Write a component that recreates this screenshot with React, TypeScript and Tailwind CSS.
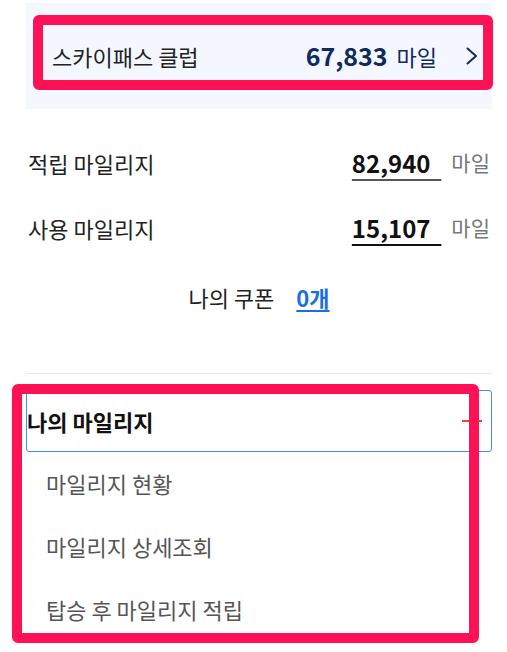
const items = ["마일리지 현황", "마일리지 상세조회", "탑승 후 마일리지 적립"];

export default function App() {
  return (
    <div className="relative w-[507px] h-[652px] bg-white overflow-hidden font-['Noto_Sans_CJK_KR','Noto_Sans',sans-serif]">
      <div className="ml-[26px] w-[466px] pt-[3px]">
        {/* SKYPASS CLUB */}
        <div className="h-[106px] bg-[#f4f7fd] flex items-center pl-[26px] pr-[14px]">
          <span className="text-[22px] text-[#222]">스카이패스 클럽</span>
          <span className="ml-auto text-[25px] font-bold text-[#0f2a5c]">67,833</span>
          <span className="ml-[9px] text-[22px] text-[#0f2a5c]">마일</span>
          <svg className="ml-[29px]" width="12" height="18" viewBox="0 0 12 18" fill="none">
            <polyline points="1.5,1.5 10,9 1.5,16.5" stroke="#0f2a5c" strokeWidth="2" strokeLinecap="round" strokeLinejoin="round" />
          </svg>
        </div>

        {/* MILEAGE ROWS */}
        <div className="mt-[34px] pl-[2px] pr-[2px] flex flex-col gap-[25px]">
          <div className="h-[40px] flex items-center">
            <span className="text-[22px] text-[#222]">적립 마일리지</span>
            <span className="ml-auto text-[24px] font-bold text-[#111] underline decoration-[#555] decoration-2 underline-offset-[6px]">
              82,940&nbsp;&nbsp;
            </span>
            <span className="ml-[10px] text-[21px] text-[#777]">마일</span>
          </div>
          <div className="h-[40px] flex items-center">
            <span className="text-[22px] text-[#222]">사용 마일리지</span>
            <span className="ml-auto text-[24px] font-bold text-[#111] underline decoration-[#111] decoration-2 underline-offset-[6px]">
              15,107&nbsp;&nbsp;
            </span>
            <span className="ml-[10px] text-[21px] text-[#777]">마일</span>
          </div>
        </div>

        {/* COUPON */}
        <div className="mt-[34px] h-[30px] flex items-center justify-center gap-[22px]">
          <span className="text-[22px] text-[#222]">나의 쿠폰</span>
          <a href="#" className="text-[22px] font-bold text-[#1a6fe0] underline underline-offset-[3px]">
            0개
          </a>
        </div>

        <div className="mt-[61px] h-px bg-[#e6e8ee]" />

        {/* ACCORDION */}
        <div className="mt-[16px] h-[62px] border border-[#4a8ae8] rounded-[3px] flex items-center">
          <span className="text-[22px] font-bold text-[#111]">나의 마일리지</span>
          <span className="ml-auto mr-[9px] relative w-[20px] h-[20px]">
            <span className="absolute left-0 top-[9px] w-[20px] h-[2px] bg-[#e8433a]" />
            <span className="absolute left-[9px] top-0 w-[2px] h-[20px] bg-[#e8433a]" />
          </span>
        </div>
        <ul className="flex flex-col">
          {items.map((t) => (
            <li key={t} className="h-[63px] flex items-center pl-[20px] text-[22px] text-[#555]">
              {t}
            </li>
          ))}
        </ul>
      </div>

      {/* ANNOTATION BOXES */}
      <div className="absolute left-[33px] top-[15px] w-[460px] h-[75px] border-[10px] border-[#ff1155] rounded-[6px]" />
      <div className="absolute left-[12px] top-[384px] w-[467px] h-[259px] border-[10px] border-[#ff1155] rounded-[6px]" />
    </div>
  );
}
